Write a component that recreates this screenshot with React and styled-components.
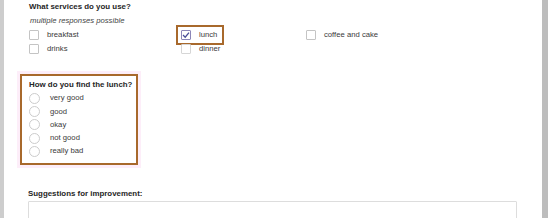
import React from "react";
import styled, { createGlobalStyle } from "styled-components";

const GlobalStyle = createGlobalStyle`
  html, body {
    margin: 0;
    padding: 0;
    background: #ffffff;
  }
  body {
    font-family: "Liberation Sans", Arial, sans-serif;
    color: #333333;
  }
`;

const services = [
  { label: "breakfast", col: 1, row: 1 },
  { label: "lunch", col: 2, row: 1, checked: true, highlight: true },
  { label: "coffee and cake", col: 3, row: 1 },
  { label: "drinks", col: 1, row: 2 },
  { label: "dinner", col: 2, row: 2, faint: true },
];

const ratings = ["very good", "good", "okay", "not good", "really bad"];

export default function App() {
  return (
    <>
      <GlobalStyle />
      <Page>
        <LeftRail />
        <Content>
          <Question>What services do you use?</Question>
          <Hint>multiple responses possible</Hint>
          <OptionGrid>
            {services.map((item) => (
              <Option
                key={item.label}
                $col={item.col}
                $row={item.row}
                $highlight={item.highlight}
              >
                <CheckBox $checked={item.checked} $faint={item.faint}>
                  {item.checked && (
                    <svg width="8" height="8" viewBox="0 0 8 8">
                      <polyline
                        points="1,4 3.2,6.2 7,1.6"
                        fill="none"
                        stroke="#4a4e98"
                        strokeWidth="1.3"
                      />
                    </svg>
                  )}
                </CheckBox>
                <OptionLabel>{item.label}</OptionLabel>
              </Option>
            ))}
          </OptionGrid>

          <RatingBox>
            <RatingTitle>How do you find the lunch?</RatingTitle>
            {ratings.map((rating) => (
              <RadioRow key={rating}>
                <Radio />
                <OptionLabel>{rating}</OptionLabel>
              </RadioRow>
            ))}
          </RatingBox>

          <Suggestions>
            <SuggestLabel>Suggestions for improvement:</SuggestLabel>
            <TextBox />
          </Suggestions>
        </Content>
        <RightRail />
      </Page>
    </>
  );
}

const Page = styled.div`
  display: flex;
  width: 548px;
  height: 218px;
  overflow: hidden;
`;

const LeftRail = styled.div`
  width: 4px;
  flex-shrink: 0;
  background: #cdcdcd;
`;

const RightRail = styled.div`
  width: 6px;
  flex-shrink: 0;
  background: #bdbdbd;
`;

const Content = styled.div`
  flex: 1;
  padding-left: 16px;
  display: flex;
  flex-direction: column;
`;

const Question = styled.div`
  margin-left: 9px;
  height: 14px;
  line-height: 14px;
  font-size: 7.9px;
  font-weight: bold;
  color: #262626;
`;

const Hint = styled.div`
  margin-left: 10px;
  height: 14px;
  line-height: 14px;
  font-size: 7.7px;
  font-style: italic;
  color: #444444;
`;

const OptionGrid = styled.div`
  margin-left: 7px;
  display: grid;
  grid-template-columns: 152px 125px 1fr;
  grid-template-rows: 14px 14px;
`;

const Option = styled.div`
  grid-column: ${(p) => p.$col};
  grid-row: ${(p) => p.$row};
  justify-self: start;
  display: flex;
  align-items: center;
  gap: 8px;
  height: 14px;
  padding: 0 ${(p) => (p.$highlight ? "4px" : "2px")} 0 2px;
  outline: ${(p) => (p.$highlight ? "2px solid #a8692c" : "none")};
  outline-offset: 1px;
  margin-left: ${(p) => (p.$highlight ? "0" : "0")};
`;

const CheckBox = styled.span`
  width: 10px;
  height: 10px;
  box-sizing: border-box;
  border: 1px solid
    ${(p) => (p.$checked ? "#8c86b8" : p.$faint ? "#d6d6d6" : "#c4c4c4")};
  border-radius: 1px;
  background: #ffffff;
  display: flex;
  align-items: center;
  justify-content: center;
`;

const OptionLabel = styled.span`
  font-size: 7.7px;
  color: #3a3a3a;
  line-height: 1;
`;

const RatingBox = styled.div`
  margin-top: 18px;
  width: 118px;
  box-sizing: border-box;
  border: 2px solid #a8692c;
  box-shadow: 0 0 0 3px #fdeef9;
  padding: 2.4px 0 5px 7px;
  display: flex;
  flex-direction: column;
`;

const RatingTitle = styled.div`
  height: 13.25px;
  line-height: 13.25px;
  font-size: 7.9px;
  font-weight: bold;
  color: #262626;
`;

const RadioRow = styled.div`
  height: 13.25px;
  display: flex;
  align-items: center;
  gap: 10px;
`;

const Radio = styled.span`
  width: 11px;
  height: 11px;
  box-sizing: border-box;
  border: 1px solid #cccccc;
  border-radius: 50%;
  background: #ffffff;
`;

const Suggestions = styled.div`
  margin-top: 22px;
  margin-left: 8px;
  display: flex;
  flex-direction: column;
`;

const SuggestLabel = styled.div`
  height: 14px;
  line-height: 14px;
  font-size: 7.9px;
  font-weight: bold;
  color: #262626;
`;

const TextBox = styled.textarea`
  width: 489px;
  height: 40px;
  box-sizing: border-box;
  border: 1px solid #dddddd;
  border-radius: 1px;
  resize: none;
  margin: 0;
`;
